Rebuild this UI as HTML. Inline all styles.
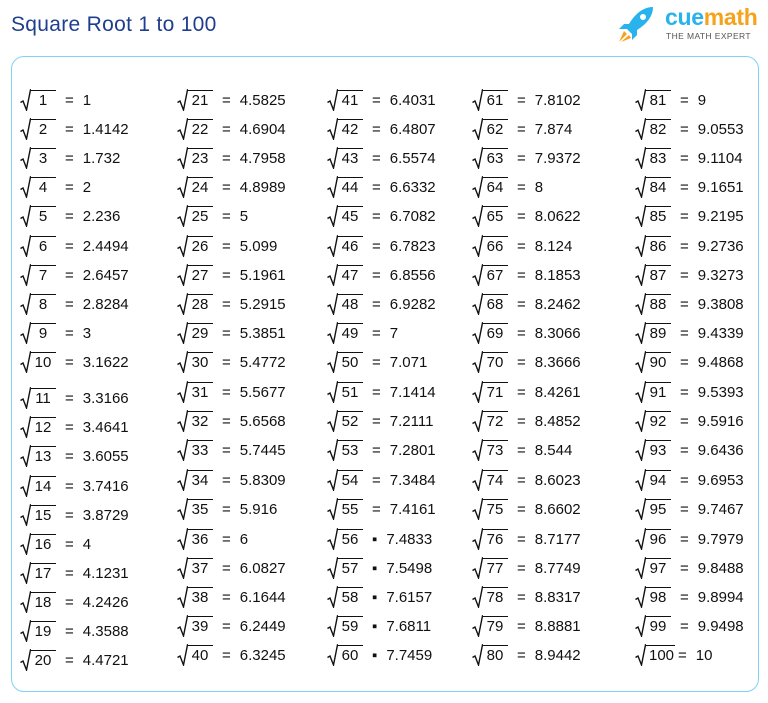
<!DOCTYPE html>
<html><head><meta charset="utf-8"><style>
body{margin:0;width:768px;height:703px;background:#fff;position:relative;overflow:hidden;font-family:"Liberation Sans",sans-serif;color:#111}
h1{position:absolute;left:11px;top:13px;margin:0;font-size:21px;font-weight:normal;color:#1f3e8f;letter-spacing:0.3px}
.box{position:absolute;left:11px;top:56px;width:746px;height:634px;border:1.5px solid #7fd3f2;border-radius:13px}
.e{position:absolute;display:flex;align-items:flex-start;height:24px;font-size:15px}
.e svg{width:11px;height:22px;flex:none}
.e i{font-style:normal;border-top:1.5px solid #111;padding:0 4px 0 3px;line-height:19px;margin-top:1px;min-width:18px;text-align:center}
.e em{font-style:normal;margin:2px 0 0 9px;line-height:20px}
.e b{font-weight:normal;margin:2px 0 0 9px;line-height:20px}
.c1{left:20px}.c2{left:177px}.c3{left:327px}.c4{left:472px}.c5{left:635px}
.y1{top:89px}.y2{top:118px}.y3{top:147px}.y4{top:176px}.y5{top:205px}.y6{top:235px}.y7{top:264px}.y8{top:293px}.y9{top:322px}.y10{top:351px}
.p11{top:387px}.p12{top:416px}.p13{top:445px}.p14{top:475px}.p15{top:504px}.p16{top:533px}.p17{top:562px}.p18{top:591px}.p19{top:620px}.p20{top:649px}
.q11{top:381px}.q12{top:410px}.q13{top:439px}.q14{top:469px}.q15{top:498px}.q16{top:528px}.q17{top:557px}.q18{top:586px}.q19{top:615px}.q20{top:644px}
</style></head><body>
<svg width="0" height="0" style="position:absolute"><symbol id="r" viewBox="0 0 11 22"><path d="M0.5 13.5 L3 12 L6.5 21 L10.5 0.8 L11 0.8" fill="none" stroke="#111" stroke-width="1.4"/></symbol></svg>
<h1>Square Root 1 to 100</h1>
<svg style="position:absolute;left:615px;top:4px" width="42" height="40" viewBox="0 0 42 40">
<path d="M12 30 L4 38 L9 27 Z" fill="#f7a21b"/>
<path d="M14 31 L6 38 L16 34 Z" fill="#f7a21b"/>
<path d="M38 3 C28 3 20 10 14 20 L9 20 L4 25 L12 25 L17 30 L17 36 L22 31 L22 26 C32 20 38 12 38 3 Z" fill="#29b3ec"/>
<circle cx="28" cy="13" r="3" fill="#fff"/>
</svg>
<div style="position:absolute;left:665px;top:4px;font-size:23px;font-weight:bold;letter-spacing:-0.3px"><span style="color:#29b3ec">cue</span><span style="color:#f7a21b">math</span></div>
<div style="position:absolute;left:666px;top:31px;font-size:8.5px;color:#555;letter-spacing:0.4px">THE MATH EXPERT</div>
<div class="box"></div>

<div class="e c1 y1"><svg><use href="#r"/></svg><i>1</i><em>=</em><b>1</b></div>
<div class="e c1 y2"><svg><use href="#r"/></svg><i>2</i><em>=</em><b>1.4142</b></div>
<div class="e c1 y3"><svg><use href="#r"/></svg><i>3</i><em>=</em><b>1.732</b></div>
<div class="e c1 y4"><svg><use href="#r"/></svg><i>4</i><em>=</em><b>2</b></div>
<div class="e c1 y5"><svg><use href="#r"/></svg><i>5</i><em>=</em><b>2.236</b></div>
<div class="e c1 y6"><svg><use href="#r"/></svg><i>6</i><em>=</em><b>2.4494</b></div>
<div class="e c1 y7"><svg><use href="#r"/></svg><i>7</i><em>=</em><b>2.6457</b></div>
<div class="e c1 y8"><svg><use href="#r"/></svg><i>8</i><em>=</em><b>2.8284</b></div>
<div class="e c1 y9"><svg><use href="#r"/></svg><i>9</i><em>=</em><b>3</b></div>
<div class="e c1 y10"><svg><use href="#r"/></svg><i>10</i><em>=</em><b>3.1622</b></div>
<div class="e c1 p11"><svg><use href="#r"/></svg><i>11</i><em>=</em><b>3.3166</b></div>
<div class="e c1 p12"><svg><use href="#r"/></svg><i>12</i><em>=</em><b>3.4641</b></div>
<div class="e c1 p13"><svg><use href="#r"/></svg><i>13</i><em>=</em><b>3.6055</b></div>
<div class="e c1 p14"><svg><use href="#r"/></svg><i>14</i><em>=</em><b>3.7416</b></div>
<div class="e c1 p15"><svg><use href="#r"/></svg><i>15</i><em>=</em><b>3.8729</b></div>
<div class="e c1 p16"><svg><use href="#r"/></svg><i>16</i><em>=</em><b>4</b></div>
<div class="e c1 p17"><svg><use href="#r"/></svg><i>17</i><em>=</em><b>4.1231</b></div>
<div class="e c1 p18"><svg><use href="#r"/></svg><i>18</i><em>=</em><b>4.2426</b></div>
<div class="e c1 p19"><svg><use href="#r"/></svg><i>19</i><em>=</em><b>4.3588</b></div>
<div class="e c1 p20"><svg><use href="#r"/></svg><i>20</i><em>=</em><b>4.4721</b></div>

<div class="e c2 y1"><svg><use href="#r"/></svg><i>21</i><em>=</em><b>4.5825</b></div>
<div class="e c2 y2"><svg><use href="#r"/></svg><i>22</i><em>=</em><b>4.6904</b></div>
<div class="e c2 y3"><svg><use href="#r"/></svg><i>23</i><em>=</em><b>4.7958</b></div>
<div class="e c2 y4"><svg><use href="#r"/></svg><i>24</i><em>=</em><b>4.8989</b></div>
<div class="e c2 y5"><svg><use href="#r"/></svg><i>25</i><em>=</em><b>5</b></div>
<div class="e c2 y6"><svg><use href="#r"/></svg><i>26</i><em>=</em><b>5.099</b></div>
<div class="e c2 y7"><svg><use href="#r"/></svg><i>27</i><em>=</em><b>5.1961</b></div>
<div class="e c2 y8"><svg><use href="#r"/></svg><i>28</i><em>=</em><b>5.2915</b></div>
<div class="e c2 y9"><svg><use href="#r"/></svg><i>29</i><em>=</em><b>5.3851</b></div>
<div class="e c2 y10"><svg><use href="#r"/></svg><i>30</i><em>=</em><b>5.4772</b></div>
<div class="e c2 q11"><svg><use href="#r"/></svg><i>31</i><em>=</em><b>5.5677</b></div>
<div class="e c2 q12"><svg><use href="#r"/></svg><i>32</i><em>=</em><b>5.6568</b></div>
<div class="e c2 q13"><svg><use href="#r"/></svg><i>33</i><em>=</em><b>5.7445</b></div>
<div class="e c2 q14"><svg><use href="#r"/></svg><i>34</i><em>=</em><b>5.8309</b></div>
<div class="e c2 q15"><svg><use href="#r"/></svg><i>35</i><em>=</em><b>5.916</b></div>
<div class="e c2 q16"><svg><use href="#r"/></svg><i>36</i><em>=</em><b>6</b></div>
<div class="e c2 q17"><svg><use href="#r"/></svg><i>37</i><em>=</em><b>6.0827</b></div>
<div class="e c2 q18"><svg><use href="#r"/></svg><i>38</i><em>=</em><b>6.1644</b></div>
<div class="e c2 q19"><svg><use href="#r"/></svg><i>39</i><em>=</em><b>6.2449</b></div>
<div class="e c2 q20"><svg><use href="#r"/></svg><i>40</i><em>=</em><b>6.3245</b></div>

<div class="e c3 y1"><svg><use href="#r"/></svg><i>41</i><em>=</em><b>6.4031</b></div>
<div class="e c3 y2"><svg><use href="#r"/></svg><i>42</i><em>=</em><b>6.4807</b></div>
<div class="e c3 y3"><svg><use href="#r"/></svg><i>43</i><em>=</em><b>6.5574</b></div>
<div class="e c3 y4"><svg><use href="#r"/></svg><i>44</i><em>=</em><b>6.6332</b></div>
<div class="e c3 y5"><svg><use href="#r"/></svg><i>45</i><em>=</em><b>6.7082</b></div>
<div class="e c3 y6"><svg><use href="#r"/></svg><i>46</i><em>=</em><b>6.7823</b></div>
<div class="e c3 y7"><svg><use href="#r"/></svg><i>47</i><em>=</em><b>6.8556</b></div>
<div class="e c3 y8"><svg><use href="#r"/></svg><i>48</i><em>=</em><b>6.9282</b></div>
<div class="e c3 y9"><svg><use href="#r"/></svg><i>49</i><em>=</em><b>7</b></div>
<div class="e c3 y10"><svg><use href="#r"/></svg><i>50</i><em>=</em><b>7.071</b></div>
<div class="e c3 q11"><svg><use href="#r"/></svg><i>51</i><em>=</em><b>7.1414</b></div>
<div class="e c3 q12"><svg><use href="#r"/></svg><i>52</i><em>=</em><b>7.2111</b></div>
<div class="e c3 q13"><svg><use href="#r"/></svg><i>53</i><em>=</em><b>7.2801</b></div>
<div class="e c3 q14"><svg><use href="#r"/></svg><i>54</i><em>=</em><b>7.3484</b></div>
<div class="e c3 q15"><svg><use href="#r"/></svg><i>55</i><em>=</em><b>7.4161</b></div>
<div class="e c3 q16"><svg><use href="#r"/></svg><i>56</i><em>▪</em><b>7.4833</b></div>
<div class="e c3 q17"><svg><use href="#r"/></svg><i>57</i><em>▪</em><b>7.5498</b></div>
<div class="e c3 q18"><svg><use href="#r"/></svg><i>58</i><em>▪</em><b>7.6157</b></div>
<div class="e c3 q19"><svg><use href="#r"/></svg><i>59</i><em>▪</em><b>7.6811</b></div>
<div class="e c3 q20"><svg><use href="#r"/></svg><i>60</i><em>▪</em><b>7.7459</b></div>

<div class="e c4 y1"><svg><use href="#r"/></svg><i>61</i><em>=</em><b>7.8102</b></div>
<div class="e c4 y2"><svg><use href="#r"/></svg><i>62</i><em>=</em><b>7.874</b></div>
<div class="e c4 y3"><svg><use href="#r"/></svg><i>63</i><em>=</em><b>7.9372</b></div>
<div class="e c4 y4"><svg><use href="#r"/></svg><i>64</i><em>=</em><b>8</b></div>
<div class="e c4 y5"><svg><use href="#r"/></svg><i>65</i><em>=</em><b>8.0622</b></div>
<div class="e c4 y6"><svg><use href="#r"/></svg><i>66</i><em>=</em><b>8.124</b></div>
<div class="e c4 y7"><svg><use href="#r"/></svg><i>67</i><em>=</em><b>8.1853</b></div>
<div class="e c4 y8"><svg><use href="#r"/></svg><i>68</i><em>=</em><b>8.2462</b></div>
<div class="e c4 y9"><svg><use href="#r"/></svg><i>69</i><em>=</em><b>8.3066</b></div>
<div class="e c4 y10"><svg><use href="#r"/></svg><i>70</i><em>=</em><b>8.3666</b></div>
<div class="e c4 q11"><svg><use href="#r"/></svg><i>71</i><em>=</em><b>8.4261</b></div>
<div class="e c4 q12"><svg><use href="#r"/></svg><i>72</i><em>=</em><b>8.4852</b></div>
<div class="e c4 q13"><svg><use href="#r"/></svg><i>73</i><em>=</em><b>8.544</b></div>
<div class="e c4 q14"><svg><use href="#r"/></svg><i>74</i><em>=</em><b>8.6023</b></div>
<div class="e c4 q15"><svg><use href="#r"/></svg><i>75</i><em>=</em><b>8.6602</b></div>
<div class="e c4 q16"><svg><use href="#r"/></svg><i>76</i><em>=</em><b>8.7177</b></div>
<div class="e c4 q17"><svg><use href="#r"/></svg><i>77</i><em>=</em><b>8.7749</b></div>
<div class="e c4 q18"><svg><use href="#r"/></svg><i>78</i><em>=</em><b>8.8317</b></div>
<div class="e c4 q19"><svg><use href="#r"/></svg><i>79</i><em>=</em><b>8.8881</b></div>
<div class="e c4 q20"><svg><use href="#r"/></svg><i>80</i><em>=</em><b>8.9442</b></div>

<div class="e c5 y1"><svg><use href="#r"/></svg><i>81</i><em>=</em><b>9</b></div>
<div class="e c5 y2"><svg><use href="#r"/></svg><i>82</i><em>=</em><b>9.0553</b></div>
<div class="e c5 y3"><svg><use href="#r"/></svg><i>83</i><em>=</em><b>9.1104</b></div>
<div class="e c5 y4"><svg><use href="#r"/></svg><i>84</i><em>=</em><b>9.1651</b></div>
<div class="e c5 y5"><svg><use href="#r"/></svg><i>85</i><em>=</em><b>9.2195</b></div>
<div class="e c5 y6"><svg><use href="#r"/></svg><i>86</i><em>=</em><b>9.2736</b></div>
<div class="e c5 y7"><svg><use href="#r"/></svg><i>87</i><em>=</em><b>9.3273</b></div>
<div class="e c5 y8"><svg><use href="#r"/></svg><i>88</i><em>=</em><b>9.3808</b></div>
<div class="e c5 y9"><svg><use href="#r"/></svg><i>89</i><em>=</em><b>9.4339</b></div>
<div class="e c5 y10"><svg><use href="#r"/></svg><i>90</i><em>=</em><b>9.4868</b></div>
<div class="e c5 q11"><svg><use href="#r"/></svg><i>91</i><em>=</em><b>9.5393</b></div>
<div class="e c5 q12"><svg><use href="#r"/></svg><i>92</i><em>=</em><b>9.5916</b></div>
<div class="e c5 q13"><svg><use href="#r"/></svg><i>93</i><em>=</em><b>9.6436</b></div>
<div class="e c5 q14"><svg><use href="#r"/></svg><i>94</i><em>=</em><b>9.6953</b></div>
<div class="e c5 q15"><svg><use href="#r"/></svg><i>95</i><em>=</em><b>9.7467</b></div>
<div class="e c5 q16"><svg><use href="#r"/></svg><i>96</i><em>=</em><b>9.7979</b></div>
<div class="e c5 q17"><svg><use href="#r"/></svg><i>97</i><em>=</em><b>9.8488</b></div>
<div class="e c5 q18"><svg><use href="#r"/></svg><i>98</i><em>=</em><b>9.8994</b></div>
<div class="e c5 q19"><svg><use href="#r"/></svg><i>99</i><em>=</em><b>9.9498</b></div>
<div class="e c5 q20"><svg><use href="#r"/></svg><i style="padding-right:1px">100</i><em style="margin-left:3px">=</em><b>10</b></div>
</body></html>
